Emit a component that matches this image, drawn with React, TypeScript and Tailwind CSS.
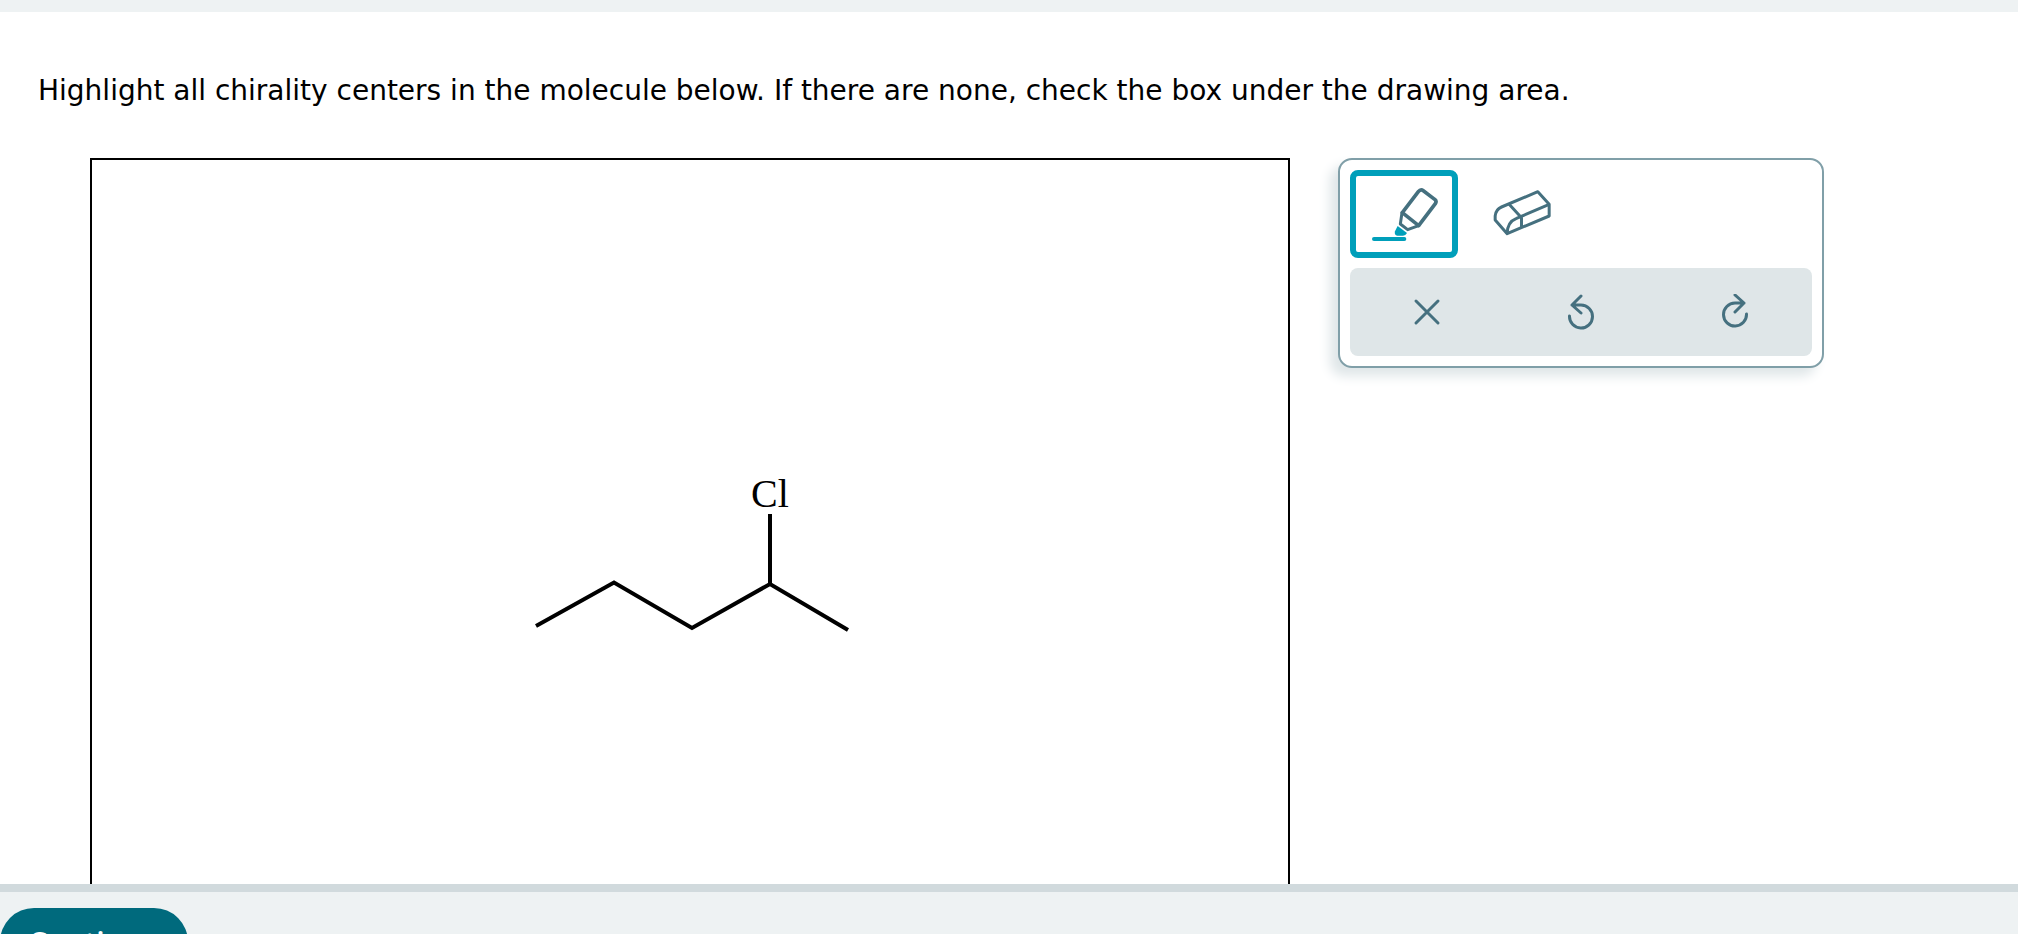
import React from "react";

const HighlighterIcon: React.FC = () => (
  <svg viewBox="117 108 210 168" className="h-14 w-[70px]" fill="none" aria-hidden="true">
    <g stroke="#45707f" strokeLinecap="round" strokeLinejoin="round">
      <path d="M217 188L265 125Q272 116 280 122L314 148Q321 153 316 161L266 227Z" strokeWidth="11" />
      <path d="M216 188L211 222L233 239L266 227" strokeWidth="9" />
    </g>
    <path d="M203 228L231 249Q227 257 219 257H202Q192 256 195 244Z" fill="#009fba" />
    <path d="M132 267H223" stroke="#009fba" strokeWidth="12" strokeLinecap="round" />
  </svg>
);

const EraserIcon: React.FC = () => (
  <svg
    viewBox="490 114 188 156"
    className="h-[52px] w-[63px]"
    fill="none"
    stroke="#45707f"
    strokeWidth="9"
    strokeLinejoin="round"
    aria-hidden="true"
  >
    <path d="M515 171L624 125L658 163V198L532 251L496 210V198Q498 178 515 171Z" />
    <path d="M538 163L575 203V233M658 163L560 205Q532 216 532 251" />
  </svg>
);

const CloseIcon: React.FC = () => (
  <svg viewBox="0 0 32 32" className="size-8" fill="none" stroke="#45707f" strokeWidth="3" strokeLinecap="round" aria-hidden="true">
    <path d="M5 5L27 27M27 5L5 27" />
  </svg>
);

const UndoIcon: React.FC = () => (
  <svg
    viewBox="0 0 32 36"
    className="h-9 w-8"
    fill="none"
    stroke="#45707f"
    strokeWidth="3"
    strokeLinecap="round"
    strokeLinejoin="round"
    aria-hidden="true"
  >
    <path d="M16 2L7 11L16 19M7 11H16A11.500 11.500 0 1 1 4.500 22" />
  </svg>
);

const RedoIcon: React.FC = () => (
  <svg
    viewBox="0 0 32 36"
    className="h-9 w-8"
    fill="none"
    stroke="#45707f"
    strokeWidth="3"
    strokeLinecap="round"
    strokeLinejoin="round"
    aria-hidden="true"
  >
    <path d="M16 1L25 9L16 18M25 9H16A11.500 11.500 0 1 0 27.500 20" />
  </svg>
);

const Molecule: React.FC = () => (
  <svg viewBox="0 0 320 160" className="h-40 w-80" role="img" aria-label="2-chloropentane">
    <path d="M6 148L84 104.500L162 150L240 106L318 152M240 106V36" fill="none" stroke="black" strokeWidth="4" />
    <text x="240" y="29" textAnchor="middle" fontSize="40" className="font-['Liberation_Serif',serif]">
      Cl
    </text>
  </svg>
);

const actions = [
  { label: "Clear", icon: <CloseIcon /> },
  { label: "Undo", icon: <UndoIcon /> },
  { label: "Redo", icon: <RedoIcon /> },
];

const Toolbar: React.FC = () => (
  <div className="w-[486px] rounded-[14px] border-2 border-[#809fa8] bg-white p-[10px] shadow-[-8px_8px_12px_#dfe6e8]">
    <div className="flex gap-3">
      <button
        type="button"
        aria-label="Highlight"
        aria-pressed="true"
        className="flex h-[88px] w-[108px] items-center justify-center rounded-lg border-6 border-[#009fba]"
      >
        <HighlighterIcon />
      </button>
      <button type="button" aria-label="Erase" className="flex h-[88px] w-[108px] items-center justify-center">
        <EraserIcon />
      </button>
    </div>
    <div className="mt-[10px] grid h-[88px] grid-cols-3 rounded-lg bg-[#dfe6e8]">
      {actions.map(({ label, icon }) => (
        <button key={label} type="button" aria-label={label} className="flex items-center justify-center">
          {icon}
        </button>
      ))}
    </div>
  </div>
);

const App: React.FC = () => {
  return (
    <div className="flex h-screen flex-col overflow-hidden bg-white text-black">
      <header className="h-3 shrink-0 bg-[#eef2f3]" />

      <main className="min-h-0 flex-1 overflow-hidden pt-[59px]">
        <p className="px-[38px] font-['DejaVu_Sans',Verdana,sans-serif] text-[28px] leading-10">
          Highlight all chirality centers in the molecule below. If there are none, check the box under the drawing
          area.
        </p>
        <div className="mt-[47px] flex items-start gap-12 pr-8 pl-[90px]">
          <div className="flex h-[800px] max-w-[1200px] flex-1 items-center justify-center border-2 border-black">
            <Molecule />
          </div>
          <Toolbar />
        </div>
      </main>

      {/* bottom action bar */}
      <footer className="h-[50px] shrink-0 overflow-hidden border-t-8 border-[#d1dadd] bg-[#eef2f3] pt-4">
        <button
          type="button"
          className="h-[68px] rounded-full bg-[#006a7d] px-7 font-['Open_Sans',sans-serif] text-[30px] font-semibold text-white"
        >
          Continue
        </button>
      </footer>
    </div>
  );
};

export default App;
